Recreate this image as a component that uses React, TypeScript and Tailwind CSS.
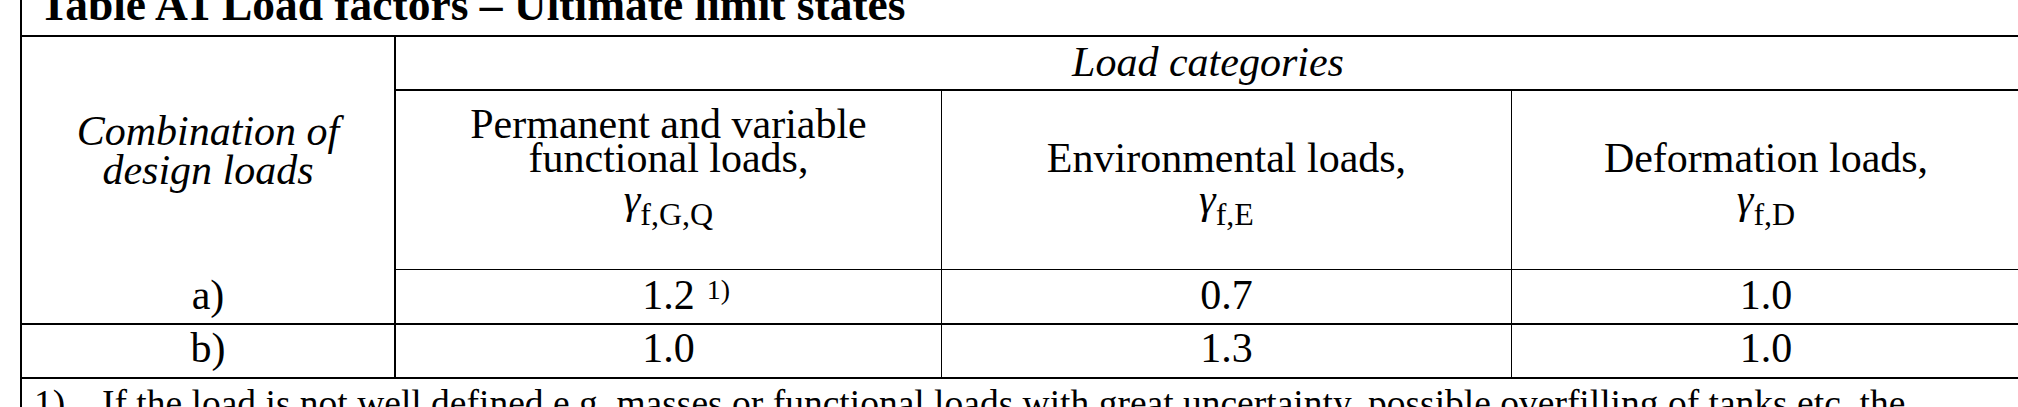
import React from "react"

const serif = "font-['Liberation_Serif','Times_New_Roman',serif]"

function Gamma({ sub }: { sub: string }) {
  return (
    <div className="h-[48px] leading-[48px] whitespace-nowrap">
      <span className="italic">γ</span>
      <span className="relative top-[12px] text-[32px] leading-none">{sub}</span>
    </div>
  )
}

function HeadCell({ lines, sub, className = "" }: { lines: string[]; sub: string; className?: string }) {
  return (
    <div className={`flex flex-col items-center justify-end pb-[46px] text-center ${className}`}>
      {lines.map((l) => (
        <div key={l} className="leading-[33.3px] whitespace-nowrap">
          {l}
        </div>
      ))}
      <Gamma sub={sub} />
    </div>
  )
}

export default function App() {
  return (
    <div className={`w-[2018px] h-[407px] overflow-hidden bg-white text-black text-[42px] ${serif}`}>
      <div className="ml-[20px] w-[2002px] border-x-2 border-black">
        {/* title */}
        <div className="h-[37px] overflow-hidden border-b-2 border-black pl-[17px]">
          <div className="-mt-[17px] text-[45.5px] leading-[44px] font-bold whitespace-nowrap">
            Table A1 Load factors – Ultimate limit states
          </div>
        </div>

        {/* header + row a */}
        <div className="flex h-[288px] border-b-2 border-black">
          <div className="flex w-[374px] flex-col border-r-2 border-black">
            <div className="pt-[75px] text-center italic">
              <div className="leading-[39.3px]">Combination of</div>
              <div className="leading-[39.3px]">design loads</div>
            </div>
            <div className="mt-auto h-[53px] text-center leading-[50px]">a)</div>
          </div>

          <div className="flex flex-1 flex-col">
            <div className="h-[54px] border-b-2 border-black pt-[1px] text-center italic leading-[48px]">
              Load categories
            </div>
            <div className="flex h-[179px] border-b border-black">
              <HeadCell
                className="w-[546px] border-r border-black"
                lines={["Permanent and variable", "functional loads,"]}
                sub="f,G,Q"
              />
              <HeadCell className="w-[570px] border-r border-black" lines={["Environmental loads,"]} sub="f,E" />
              <HeadCell className="flex-1" lines={["Deformation loads,"]} sub="f,D" />
            </div>
            <div className="flex h-[53px] leading-[50px] text-center">
              <div className="w-[546px] border-r border-black">
                <span className="relative inline-block">
                  1.2
                  <span className="absolute left-full top-[6px] pl-[12px] text-[28px] leading-none whitespace-nowrap">
                    1)
                  </span>
                </span>
              </div>
              <div className="w-[570px] border-r border-black">0.7</div>
              <div className="flex-1">1.0</div>
            </div>
          </div>
        </div>

        {/* row b */}
        <div className="flex h-[54px] border-b-2 border-black text-center leading-[47px]">
          <div className="w-[374px] border-r-2 border-black">b)</div>
          <div className="w-[546px] border-r border-black">1.0</div>
          <div className="w-[570px] border-r border-black">1.3</div>
          <div className="flex-1">1.0</div>
        </div>

        {/* footnote */}
        <div className="flex pl-[12px] pt-[1px] text-[37.5px] leading-[48px] whitespace-nowrap">
          <span className="w-[68px] shrink-0">1)</span>
          <span>
            If the load is not well defined e.g. masses or functional loads with great uncertainty, possible
            overfilling of tanks etc. the
          </span>
        </div>
      </div>
    </div>
  )
}
